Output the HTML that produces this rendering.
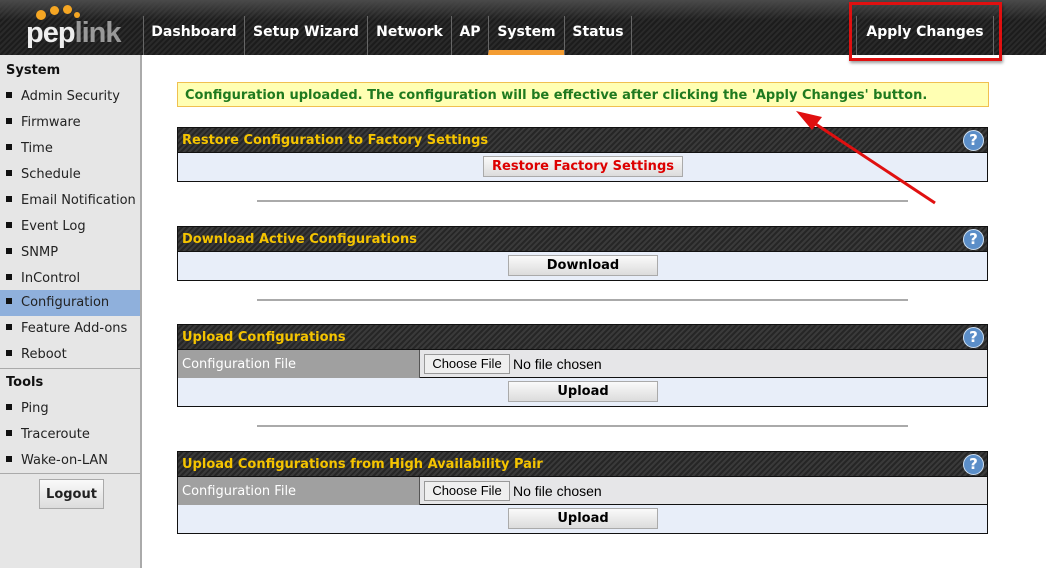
<!DOCTYPE html>
<html><head><meta charset="utf-8"><style>
*{margin:0;padding:0;box-sizing:border-box}
body{width:1046px;height:568px;overflow:hidden;background:#fff;font-family:"DejaVu Sans","Liberation Sans",sans-serif;font-size:13px;position:relative}
.hdr{position:absolute;left:0;top:0;width:1046px;height:55px;background:repeating-linear-gradient(135deg,#2a2a2a 0 2px,#1c1c1c 2px 4px);}
.hdr:before{content:"";position:absolute;left:0;top:0;right:0;height:20px;background:linear-gradient(#4a4a4a,rgba(60,60,60,0))}
.tab{position:absolute;top:16px;height:39px;color:#fff;font-weight:bold;font-size:14px;line-height:33px;text-align:center;border-left:1px solid #666}
.side{position:absolute;left:0;top:55px;width:142px;height:513px;background:#e6e6e6;border-right:2px solid #aaa}
.side div{position:absolute;left:0;width:140px;height:26px;line-height:26px;padding-left:6px;color:#222}
.side .it:before{content:"";display:inline-block;width:6px;height:6px;background:#111;margin-right:9px;vertical-align:2px}
.side h4{position:absolute;left:6px;font-size:13px;color:#111}
.box{position:absolute;left:177px;width:811px;border:1px solid #111}
.bh{height:25px;background:repeating-linear-gradient(135deg,#3a3a3a 0 2px,#262626 2px 4px);color:#f5c400;font-weight:bold;font-size:13px;line-height:25px;padding-left:4px;position:relative;border-bottom:1px solid #111}
.q{position:absolute;right:3px;top:2px;width:21px;height:21px;border-radius:50%;background:#5b8ec8;border:1px solid #cfe0f2;color:#fff;font-weight:bold;font-size:15px;line-height:19px;text-align:center}
.row{height:28px;background:#e8eef9;position:relative}
.btn{position:absolute;top:3px;height:21px;border:1px solid #aaa;background:linear-gradient(#fafafa,#dcdcdc);font-weight:bold;text-align:center;line-height:19px;font-size:13px}
.lab{position:absolute;left:0;top:0;width:242px;height:28px;background:#a0a0a0;color:#fff;line-height:29px;padding-left:4px;border-right:1px solid #555}
.frow{height:28px;background:#e6e6e8;position:relative;border-bottom:1px solid #111}
.cf{position:absolute;left:246px;top:4px;width:86px;height:20px;border:1px solid #999;background:#efefef;font-family:"Liberation Sans",sans-serif;font-size:13px;line-height:18px;text-align:center}
.nf{position:absolute;left:335px;top:4px;font-family:"Liberation Sans",sans-serif;font-size:14px;line-height:20px}
.hr{position:absolute;left:257px;width:651px;height:2px;background:#aaa}
</style></head><body>
<div class="hdr">
  <div style="position:absolute;left:26px;top:17px;font-family:'Liberation Sans',sans-serif;font-weight:bold;font-size:29px;letter-spacing:-1px;color:#eee">pep<span style="color:#999">link</span></div>
  <div style="position:absolute;left:36px;top:10px;width:10px;height:10px;border-radius:50%;background:#f5a623"></div>
  <div style="position:absolute;left:50px;top:6px;width:9px;height:9px;border-radius:50%;background:#f5a623"></div>
  <div style="position:absolute;left:63px;top:5px;width:9px;height:9px;border-radius:50%;background:#f5a623"></div>
  <div style="position:absolute;left:74px;top:12px;width:6px;height:6px;border-radius:50%;background:#f5a623"></div>
  <div class="tab" style="left:143px;width:101px">Dashboard</div>
  <div class="tab" style="left:244px;width:123px">Setup Wizard</div>
  <div class="tab" style="left:367px;width:84px">Network</div>
  <div class="tab" style="left:451px;width:37px">AP</div>
  <div class="tab" style="left:488px;width:76px;border-bottom:5px solid #f39c32">System</div>
  <div class="tab" style="left:564px;width:68px;border-right:1px solid #666">Status</div>
  <div class="tab" style="left:856px;width:138px;border-right:1px solid #666;font-size:14px">Apply Changes</div>
</div>
<div style="position:absolute;left:849px;top:2px;width:153px;height:59px;border:3px solid #e01010;box-shadow:1px 2px 3px rgba(0,0,0,.4)"></div>
<div class="side">
  <h4 style="top:8px">System</h4>
  <div class="it" style="top:29px">Admin Security</div>
  <div class="it" style="top:55px">Firmware</div>
  <div class="it" style="top:81px">Time</div>
  <div class="it" style="top:107px">Schedule</div>
  <div class="it" style="top:133px">Email Notification</div>
  <div class="it" style="top:159px">Event Log</div>
  <div class="it" style="top:185px">SNMP</div>
  <div class="it" style="top:211px">InControl</div>
  <div class="it" style="top:235px;height:26px;line-height:26px;background:#8fb0dc">Configuration</div>
  <div class="it" style="top:261px">Feature Add-ons</div>
  <div class="it" style="top:287px">Reboot</div>
  <div style="top:313px;height:1px;background:#aaa;padding:0"></div>
  <h4 style="top:320px">Tools</h4>
  <div class="it" style="top:341px">Ping</div>
  <div class="it" style="top:367px">Traceroute</div>
  <div class="it" style="top:393px">Wake-on-LAN</div>
  <div style="top:418px;height:1px;background:#aaa;padding:0"></div>
  <div style="top:424px;left:39px;width:65px;height:30px;border:1px solid #aaa;background:linear-gradient(#fafafa,#dcdcdc);font-weight:bold;text-align:center;line-height:29px;padding:0">Logout</div>
</div>
<div style="position:absolute;left:177px;top:82px;width:812px;height:25px;background:#ffffb3;border:1px solid #f0c050;color:#1f7a1f;font-weight:bold;line-height:25px;padding-left:7px">Configuration uploaded. The configuration will be effective after clicking the 'Apply Changes' button.</div>

<div class="box" style="top:127px"><div class="bh">Restore Configuration to Factory Settings<span class="q">?</span></div>
<div class="row"><div class="btn" style="left:305px;width:200px;color:#d00">Restore Factory Settings</div></div></div>
<div class="hr" style="top:200px"></div>

<div class="box" style="top:226px"><div class="bh">Download Active Configurations<span class="q">?</span></div>
<div class="row"><div class="btn" style="left:330px;width:150px">Download</div></div></div>
<div class="hr" style="top:299px"></div>

<div class="box" style="top:324px"><div class="bh">Upload Configurations<span class="q">?</span></div>
<div class="frow"><div class="lab">Configuration File</div><div class="cf">Choose File</div><div class="nf">No file chosen</div></div>
<div class="row"><div class="btn" style="left:330px;width:150px">Upload</div></div></div>
<div class="hr" style="top:425px"></div>

<div class="box" style="top:451px"><div class="bh">Upload Configurations from High Availability Pair<span class="q">?</span></div>
<div class="frow"><div class="lab">Configuration File</div><div class="cf">Choose File</div><div class="nf">No file chosen</div></div>
<div class="row"><div class="btn" style="left:330px;width:150px">Upload</div></div></div>

<svg style="position:absolute;left:0;top:0" width="1046" height="568">
<line x1="935" y1="203" x2="808" y2="119" stroke="#e01010" stroke-width="3"/>
<polygon points="796,111 822,117 812,130" fill="#e01010"/>
</svg>
</body></html>
